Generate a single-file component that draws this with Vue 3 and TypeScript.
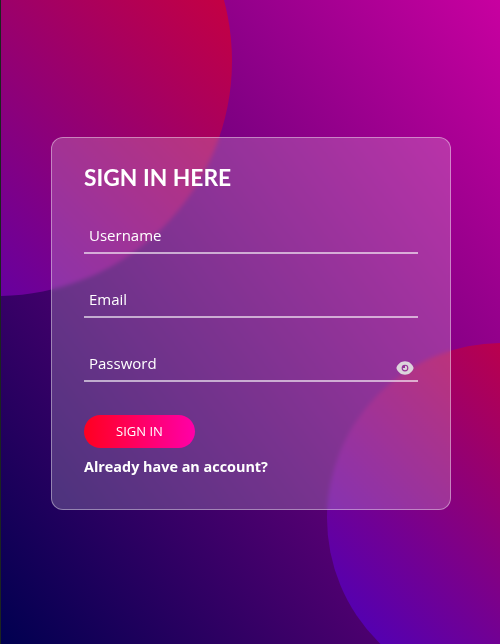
<script setup lang="ts">
const fields = ['Username', 'Email', 'Password']
</script>

<template>
  <div class="page">
    <div class="scene">
      <div class="blob blob-top"></div>
      <div class="blob blob-bottom"></div>
      <form class="card" @submit.prevent>
        <h1 class="title">SIGN IN HERE</h1>
        <div class="fields">
          <label v-for="field in fields" :key="field" class="field">
            <span class="label">{{ field }}</span>
            <svg v-if="field === 'Password'" class="eye" viewBox="0 0 24 24" aria-hidden="true">
              <path fill-rule="evenodd" d="M12 3C6.500 3 2 6.800 0.500 12 2 17.200 6.500 21 12 21s10-3.800 11.500-9C22 6.800 17.500 3 12 3zM12 7.500a4.500 4.500 0 1 1 0 9 4.500 4.500 0 0 1 0-9z" />
              <path d="M12 9a3 3 0 1 1-3 3h3z" />
            </svg>
          </label>
        </div>
        <button class="submit" type="submit">SIGN IN</button>
        <p class="hint">Already have an account?</p>
      </form>
    </div>
  </div>
</template>

<style>
html, body { margin: 0; padding: 0; background: #1c2420; }
</style>

<style scoped>
.page {
  width: 500px;
  height: 644px;
  overflow: hidden;
  padding-left: 1px;
  box-sizing: border-box;
}
.scene {
  position: relative;
  height: 100%;
  display: flex;
  align-items: center;
  justify-content: center;
  overflow: hidden;
  background: linear-gradient(to top right, #000050, #c800a0);
  font-family: "Open Sans", "Noto Sans", sans-serif;
}
.blob {
  position: absolute;
  border-radius: 50%;
  background: linear-gradient(to top right, #3c00c8, #e40024);
}
.blob-top {
  width: 470px;
  height: 470px;
  left: -239px;
  top: -174px;
}
.blob-bottom {
  width: 350px;
  height: 350px;
  left: 326px;
  top: 343px;
}
.card {
  position: relative;
  width: 400px;
  height: 373px;
  box-sizing: border-box;
  margin-left: 1px;
  margin-top: 2px;
  padding: 25px 32px 0;
  border: 1px solid rgba(255, 255, 255, 0.4);
  border-radius: 12px;
  background: rgba(255, 255, 255, 0.2);
  backdrop-filter: blur(2px);
  color: #fff;
}
.title {
  margin: 0;
  font-family: Lato, "Open Sans", sans-serif;
  font-size: 22.8px;
  line-height: 28px;
  font-weight: 700;
}
.fields {
  display: flex;
  flex-direction: column;
  gap: 30px;
  margin-top: 29px;
}
.field {
  position: relative;
  display: block;
  height: 32px;
  padding-left: 5px;
  border-bottom: 2px solid rgba(255, 255, 255, 0.6);
}
.label {
  font-size: 15px;
  line-height: 30px;
}
.eye {
  position: absolute;
  right: 4px;
  bottom: 3px;
  width: 18px;
  height: 18px;
  fill: #dcd4dc;
}
.submit {
  display: block;
  width: 111px;
  height: 33px;
  margin-top: 33px;
  padding: 0;
  border: 0;
  border-radius: 17px;
  background: linear-gradient(to right, #ff0020, #ff00a8);
  color: #fff;
  font: 400 13px "Open Sans", "Noto Sans", sans-serif;
}
.hint {
  margin: 9px 0 0;
  font-size: 14.4px;
  line-height: 20px;
  font-weight: 700;
}
</style>
